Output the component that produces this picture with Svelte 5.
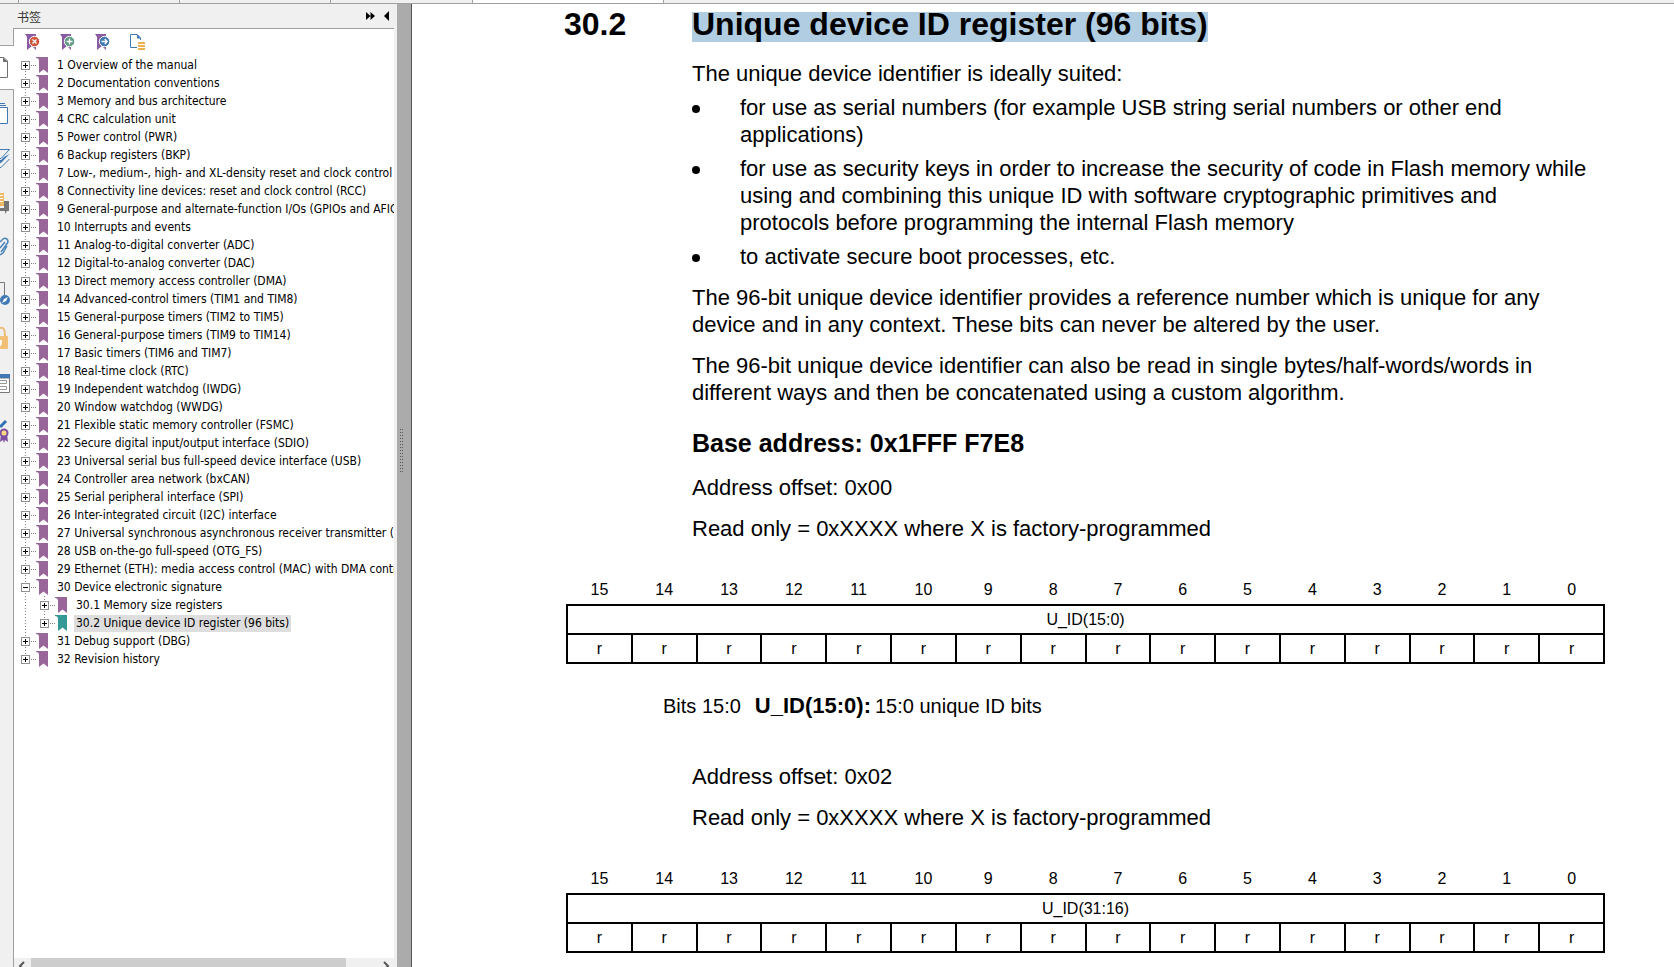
<script lang="ts">
  type Bookmark = { title: string; children?: string[] };

  const bookmarks: Bookmark[] = [
    { title: '1 Overview of the manual' },
    { title: '2 Documentation conventions' },
    { title: '3 Memory and bus architecture' },
    { title: '4 CRC calculation unit' },
    { title: '5 Power control (PWR)' },
    { title: '6 Backup registers (BKP)' },
    { title: '7 Low-, medium-, high- and XL-density reset and clock control' },
    { title: '8 Connectivity line devices: reset and clock control (RCC)' },
    { title: '9 General-purpose and alternate-function I/Os (GPIOs and AFIOs)' },
    { title: '10 Interrupts and events' },
    { title: '11 Analog-to-digital converter (ADC)' },
    { title: '12 Digital-to-analog converter (DAC)' },
    { title: '13 Direct memory access controller (DMA)' },
    { title: '14 Advanced-control timers (TIM1 and TIM8)' },
    { title: '15 General-purpose timers (TIM2 to TIM5)' },
    { title: '16 General-purpose timers (TIM9 to TIM14)' },
    { title: '17 Basic timers (TIM6 and TIM7)' },
    { title: '18 Real-time clock (RTC)' },
    { title: '19 Independent watchdog (IWDG)' },
    { title: '20 Window watchdog (WWDG)' },
    { title: '21 Flexible static memory controller (FSMC)' },
    { title: '22 Secure digital input/output interface (SDIO)' },
    { title: '23 Universal serial bus full-speed device interface (USB)' },
    { title: '24 Controller area network (bxCAN)' },
    { title: '25 Serial peripheral interface (SPI)' },
    { title: '26 Inter-integrated circuit (I2C) interface' },
    { title: '27 Universal synchronous asynchronous receiver transmitter (USART)' },
    { title: '28 USB on-the-go full-speed (OTG_FS)' },
    { title: '29 Ethernet (ETH): media access control (MAC) with DMA controller' },
    {
      title: '30 Device electronic signature',
      children: ['30.1 Memory size registers', '30.2 Unique device ID register (96 bits)']
    },
    { title: '31 Debug support (DBG)' },
    { title: '32 Revision history' }
  ];

  const bits = Array.from({ length: 16 }, (_, i) => 15 - i);

  let opened = $state(true);
  let selected = $state('30.2 Unique device ID register (96 bits)');
</script>

{#snippet row(title: string, open: boolean, toggle: () => void)}
  <div class="row">
    <button class="toggle" aria-label={open ? 'Collapse' : 'Expand'} onclick={toggle}>
      <svg width="9" height="9" viewBox="0 0 9 9" shape-rendering="crispEdges">
        <rect x="0.5" y="0.5" width="8" height="8" fill="#fff" stroke="#919191" />
        <path d={open ? 'M2 4.5h5' : 'M2 4.5h5M4.5 2v5'} stroke="#000" />
      </svg>
    </button>
    <span class="dots"></span>
    <svg class="ribbon" class:current={title === selected} width="12" height="16" viewBox="0 0 12 16">
      <path d="M0 0H12V16L7.5 12.500L3 16V4C3 2 2 1 0 1Z" />
    </svg>
    <a
      href="#top"
      class:selected={title === selected}
      onclick={(e) => {
        e.preventDefault();
        selected = title;
      }}>{title}</a>
  </div>
{/snippet}

{#snippet register(name: string)}
  <table>
    <thead>
      <tr>
        {#each bits as bit}<th scope="col">{bit}</th>{/each}
      </tr>
    </thead>
    <tbody>
      <tr><td colspan="16">{name}</td></tr>
      <tr>
        {#each bits as bit (bit)}<td>r</td>{/each}
      </tr>
    </tbody>
  </table>
{/snippet}

<div class="app">
  <!-- Lower edge of the document tabs -->
  <div class="tabs">
    <span class="tab first"></span>
    <span class="tab wide"></span>
    <span class="tab medium"></span>
    <span class="tab"></span>
    <span class="tab active"></span>
  </div>

  <div class="main">
    <aside>
      <header>
        <span class="panel-title">书签</span>
        <button aria-label="Expand panel">
          <svg width="9" height="8" viewBox="0 0 9 8"><path d="M0 0L4.500 4L0 8ZM4.500 0L9 4L4.500 8Z" fill="#000" /></svg>
        </button>
        <button aria-label="Hide panel">
          <svg width="5" height="10" viewBox="0 0 5 10"><path d="M5 0V10L0 5Z" fill="#000" /></svg>
        </button>
      </header>

      <div class="body">
        <nav class="rail" aria-label="Panels">
          <button class="active" aria-label="Bookmarks">
            <svg width="13" height="43" viewBox="0 0 13 43">
              <path d="M0 11.500H4L7.500 15V31.500H0" fill="#fff" stroke="#707070" />
              <path d="M3 11.500V16H8Z" fill="#707070" />
            </svg>
          </button>
          <button aria-label="Pages">
            <svg width="13" height="45" viewBox="0 0 13 45" fill="none" stroke="#3f78b5">
              <path d="M0 13.500H5M0 15.500H6M0 17.500H7.500V33.500H0" />
              <path d="M0 18H7V33H0Z" fill="#fff" stroke="none" />
            </svg>
          </button>
          <button aria-label="Layers">
            <svg width="13" height="45" viewBox="0 0 13 45">
              <path d="M0 14.500H9.500L1 23.500H0M9.500 24L1 32.500H0" fill="none" stroke="#3f78b5" />
              <path d="M0 25H1L4 22L9.500 19L1 28H0Z" fill="#3f78b5" />
            </svg>
          </button>
          <button aria-label="Comments">
            <svg width="13" height="45" viewBox="0 0 13 45">
              <path d="M4 21H9V31H7L5 34V31H0V28H4Z" fill="#757575" />
              <rect y="13" width="4" height="13" fill="#f0b865" />
              <path d="M0 15.500H3M0 18.500H3M0 21.500H3" stroke="#fff" />
            </svg>
          </button>
          <button aria-label="Attachments">
            <svg width="13" height="45" viewBox="0 0 13 45">
              <path d="M0 17L3 14C6 12 9 15 7.500 18L1 27M0 23L5 17M0 30L3 28L7 21" fill="none" stroke="#4b83bb" stroke-width="1.500" />
            </svg>
          </button>
          <button aria-label="Destinations">
            <svg width="13" height="45" viewBox="0 0 13 45">
              <path d="M0 12.500H4.500V25" fill="none" stroke="#777" />
              <circle cx="5" cy="30" r="5" fill="#3f78b5" />
              <path d="M8 27L6 31L2 33L4 29Z" fill="#fff" />
            </svg>
          </button>
          <button aria-label="Security">
            <svg width="13" height="45" viewBox="0 0 13 45">
              <path d="M0 13C4 12 5 15 5 22" fill="none" stroke="#edbd78" stroke-width="2" />
              <rect y="21" width="8" height="13" rx="1" fill="#f2bf77" />
              <path d="M0 25H2V27L1 31H0Z" fill="#fff" />
            </svg>
          </button>
          <button aria-label="Form fields">
            <svg width="13" height="45" viewBox="0 0 13 45">
              <path d="M0 18H9.500V32.500H0" fill="#fff" stroke="#777" />
              <rect y="14" width="10" height="4" fill="#3f78b5" />
              <path d="M0 20.500H6.500V23.500H0M0 26.500H6.500V29.500H0" fill="none" stroke="#999" />
            </svg>
          </button>
          <button aria-label="Signatures">
            <svg width="13" height="45" viewBox="0 0 13 45">
              <path d="M0 22L6 16" stroke="#2f70b2" stroke-width="3" />
              <path d="M1 29L0 37L3 35L4 38L5 35L8 37L7 29Z" fill="#7e50a0" />
              <circle cx="4" cy="28" r="4.500" fill="#7e50a0" />
              <circle cx="4" cy="28" r="2.500" fill="#f8d983" />
            </svg>
          </button>
        </nav>

        <section class="panel">
          <div class="toolbar">
            <button aria-label="Delete bookmark">
              <svg width="16" height="17" viewBox="0 0 16 17">
                <path d="M0 1H11V17L7 13L2 17V4Z" fill="#8a5aa3" />
                <circle cx="9.500" cy="8.500" r="5.200" fill="#d2553a" stroke="#fff" />
                <path d="M7.500 6.500L11.500 10.500M11.500 6.500L7.500 10.500" stroke="#fff" stroke-width="1.300" />
              </svg>
            </button>
            <button aria-label="Add bookmark">
              <svg width="16" height="17" viewBox="0 0 16 17">
                <path d="M0 1H11V17L7 13L2 17V4Z" fill="#8a5aa3" />
                <circle cx="9.500" cy="8.500" r="5.200" fill="#5d9c80" stroke="#fff" />
                <path d="M6.500 8.500H12.500M9.500 5.500V11.500" stroke="#fff" stroke-width="1.300" />
              </svg>
            </button>
            <button aria-label="Go to bookmark">
              <svg width="16" height="17" viewBox="0 0 16 17">
                <path d="M0 1H11V17L7 13L2 17V4Z" fill="#8a5aa3" />
                <circle cx="9.500" cy="8.500" r="5.200" fill="#3f78b5" stroke="#fff" />
                <path d="M6.500 8.500H12M9.700 6L12.200 8.500L9.700 11" fill="none" stroke="#fff" stroke-width="1.300" />
              </svg>
            </button>
            <button aria-label="Bookmark options">
              <svg width="16" height="17" viewBox="0 0 16 17">
                <path d="M7 14.500H0.500V1.500H7L10.500 5V7" fill="none" stroke="#3f78b5" />
                <path d="M7 1V5.500H11Z" fill="#3f78b5" />
                <path d="M8 10H15M8 13H15M8 16H15" stroke="#efb054" stroke-width="2" />
              </svg>
            </button>
          </div>

          <ul class="tree">
            {#each bookmarks as item (item.title)}
              <li>
                {@render row(item.title, !!item.children && opened, () => {
                  if (item.children) opened = !opened;
                })}
                {#if item.children && opened}
                  <ul>
                    {#each item.children as child (child)}
                      <li>{@render row(child, false, () => {})}</li>
                    {/each}
                  </ul>
                {/if}
              </li>
            {/each}
          </ul>

          <div class="scrollbar">
            <svg width="17" height="9" viewBox="0 0 17 9"><path d="M10 4L6 8L8 10" fill="none" stroke="#555" stroke-width="2" /></svg>
            <div class="track"><span></span></div>
            <svg width="17" height="9" viewBox="0 0 17 9"><path d="M7 4L11 8L9 10" fill="none" stroke="#555" stroke-width="2" /></svg>
          </div>
        </section>
      </div>
    </aside>

    <div class="splitter"><span class="grip"></span></div>

    <main id="top">
      <h1><span class="number">30.2</span><mark>Unique device ID register (96 bits)</mark></h1>
      <div class="prose">
        <p class="lead">The unique device identifier is ideally suited:</p>
        <ul class="uses">
          <li>for use as serial numbers (for example USB string serial numbers or other end applications)</li>
          <li>
            for use as security keys in order to increase the security of code in Flash memory while
            using and combining this unique ID with software cryptographic primitives and protocols
            before programming the internal Flash memory
          </li>
          <li>to activate secure boot processes, etc.</li>
        </ul>
        <p>
          The 96-bit unique device identifier provides a reference number which is unique for any
          device and in any context. These bits can never be altered by the user.
        </p>
        <p>
          The 96-bit unique device identifier can also be read in single bytes/half-words/words in
          different ways and then be concatenated using a custom algorithm.
        </p>
        <h2>Base address: 0x1FFF F7E8</h2>
        <p>Address offset: 0x00</p>
        <p>Read only = 0xXXXX where X is factory-programmed</p>
      </div>
      {@render register('U_ID(15:0)')}
      <p class="field"><span>Bits 15:0</span><b>U_ID(15:0):</b><span>15:0 unique ID bits</span></p>
      <div class="prose">
        <p>Address offset: 0x02</p>
        <p>Read only = 0xXXXX where X is factory-programmed</p>
      </div>
      {@render register('U_ID(31:16)')}
    </main>
  </div>
</div>

<style>
  :global(body) {
    margin: 0;
    overflow: hidden;
  }

  .app {
    display: flex;
    flex-direction: column;
    height: 100vh;
    background: #fff;
    color: #000;
    font-family: 'Liberation Sans', Arial, sans-serif;
  }

  button {
    display: flex;
    padding: 0;
    border: 0;
    background: none;
  }

  ul {
    margin: 0;
    padding: 0;
    list-style: none;
  }

  svg {
    flex: none;
  }

  /* Tab strip */
  .tabs {
    display: flex;
    flex: none;
    height: 3px;
    background: #f0f0f0;
    border-bottom: 1px solid #a0a0a0;
  }

  .tab {
    box-sizing: border-box;
    width: 142px;
    border-right: 1px solid #a0a0a0;
  }

  .tab.first {
    width: 19px;
  }

  .tab.wide {
    width: 161px;
  }

  .tab.medium {
    width: 151px;
  }

  .tab.active {
    width: 191px;
    background: #fff;
  }

  .main {
    display: flex;
    flex: 1;
    min-height: 0;
  }

  /* Bookmark side */
  aside {
    display: flex;
    flex: none;
    flex-direction: column;
    width: 397px;
    background: #f0f0f0;
    font-family: 'DejaVu Sans Condensed', Tahoma, 'Noto Sans CJK SC', sans-serif;
    font-size: 12px;
  }

  header {
    display: flex;
    align-items: center;
    gap: 9px;
    height: 24px;
    padding: 0 8px 0 17px;
  }

  .panel-title {
    flex: 1;
    color: #333;
    font-family: 'Noto Sans CJK SC', sans-serif;
  }

  .body {
    display: flex;
    flex: 1;
    min-height: 0;
    padding-right: 3px;
  }

  .rail {
    display: flex;
    flex-direction: column;
    width: 14px;
  }

  .rail::before,
  .rail::after {
    content: '';
    height: 17px;
    border-right: 1px solid #a0a0a0;
  }

  .rail::after {
    flex: 1;
  }

  .rail button {
    box-sizing: border-box;
    height: 45px;
    border-right: 1px solid #a0a0a0;
  }

  .rail .active {
    border: solid #a0a0a0;
    border-width: 1px 0;
    background: #fff;
  }

  .panel {
    display: flex;
    flex: 1;
    flex-direction: column;
    min-width: 0;
    border-top: 1px solid #a0a0a0;
    background: #fff;
  }

  .toolbar {
    display: flex;
    gap: 19px;
    height: 23px;
    padding: 4px 0 0 11px;
  }

  .tree {
    flex: 1;
    min-height: 0;
    overflow: hidden;
  }

  .tree li {
    position: relative;
  }

  /* Dotted guide behind the toggles */
  .tree li::before {
    content: '';
    position: absolute;
    top: 0;
    bottom: 0;
    left: 11px;
    width: 1px;
    background: repeating-linear-gradient(#808080 0 1px, transparent 1px 3px);
  }

  .tree > li:first-child::before {
    top: 9px;
  }

  .tree li:last-child::before {
    bottom: 9px;
  }

  .tree ul {
    padding-left: 19px;
  }

  .row {
    display: flex;
    position: relative;
    align-items: center;
    height: 18px;
    padding-left: 7px;
  }

  .dots {
    flex: none;
    width: 5px;
    height: 1px;
    margin-left: 1px;
    background: repeating-linear-gradient(90deg, #808080 0 1px, transparent 1px 2px);
  }

  .ribbon {
    margin-right: 7px;
    fill: #986698;
  }

  .ribbon.current {
    fill: #339896;
  }

  .row a {
    padding: 0 2px;
    color: #000;
    line-height: 17px;
    text-decoration: none;
    white-space: nowrap;
  }

  .row .selected {
    background: #dedede;
  }

  .scrollbar {
    display: flex;
    flex: none;
    height: 9px;
    background: #f0f0f0;
  }

  .track {
    flex: 1;
  }

  .track span {
    display: block;
    width: 91%;
    height: 100%;
    background: #cdcdcd;
  }

  .splitter {
    display: flex;
    flex: none;
    align-items: center;
    width: 14px;
    border-right: 1px solid #555;
    background: #ababab;
  }

  .grip {
    width: 3px;
    height: 44px;
    margin: 0 0 69px 3px;
    background:
      linear-gradient(90deg, transparent 1px, #ababab 1px 2px, transparent 2px),
      repeating-linear-gradient(#555 0 1px, transparent 1px 3px);
  }

  /* Manual page */
  main {
    flex: 1;
    min-width: 0;
    padding: 8px 69px 0 152px;
    overflow: hidden;
    font-size: 22px;
    line-height: 27px;
  }

  h1 {
    display: flex;
    margin: 0 0 18px;
    font-size: 32px;
    line-height: 24px;
  }

  .number {
    width: 128px;
  }

  mark {
    padding-bottom: 6px;
    background: #b0cde2;
    color: inherit;
  }

  .prose {
    padding: 0 13px 0 128px;
  }

  p,
  h2 {
    margin: 0 0 14px;
  }

  h2 {
    margin: 24px 0 17px;
    font-size: 25px;
  }

  .lead {
    margin-bottom: 7px;
  }

  .uses {
    margin-bottom: 14px;
  }

  .uses li {
    position: relative;
    margin-bottom: 7px;
    padding-left: 48px;
  }

  .uses li::before {
    content: '';
    position: absolute;
    top: 11px;
    left: 0;
    width: 8px;
    height: 8px;
    border-radius: 50%;
    background: #000;
  }

  table {
    width: calc(100% - 2px);
    margin: 34px 0 28px 2px;
    border-collapse: collapse;
    table-layout: fixed;
    font-size: 16px;
    line-height: 27px;
    text-align: center;
  }

  th {
    padding: 0 0 1px;
    font-weight: normal;
  }

  td {
    padding: 0;
    border: 2px solid #000;
  }

  .field {
    display: flex;
    align-items: baseline;
    margin: 0 0 43px 99px;
    font-size: 20px;
  }

  .field b {
    margin: 0 4px 0 14px;
    font-size: 22px;
  }
</style>
